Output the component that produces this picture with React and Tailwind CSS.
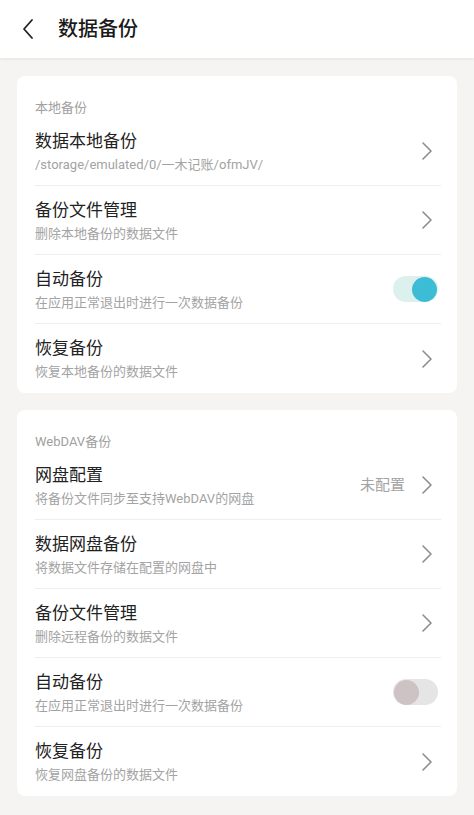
import React from 'react';

const font = { fontFamily: 'Roboto, "Noto Sans CJK SC", "Noto Sans", sans-serif' };

const Chevron = () => (
    <svg width="12" height="20" viewBox="0 0 12 20" fill="none" className="flex-shrink-0">
        <path d="M2 2l8 8-8 8" stroke="#8c8c8c" strokeWidth="1.6" strokeLinecap="round" strokeLinejoin="round" />
    </svg>
);

const Toggle = ({ on }) => (
    <div className="pr-[3px]">
        <div className={`w-[45px] h-[26px] rounded-full flex items-center px-[1px] ${on ? 'bg-[#dcf0ee] justify-end' : 'bg-[#e6e5e5] justify-start'}`}>
            <div className={`w-[25px] h-[25px] rounded-full ${on ? 'bg-[#3dbdd5]' : 'bg-[#cdc2c4]'}`} />
        </div>
    </div>
);

const Row = ({ title, sub, right, last }) => (
    <div className={`h-[69px] flex items-center ${last ? '' : 'border-b border-[#efeeee]'}`}>
        <div className="flex-1 min-w-0 pt-[1px]">
            <div className="text-[17px] leading-[24px] text-[#222]">{title}</div>
            <div className="text-[13px] leading-[20px] text-[#a3a3a3] mt-[2px]">{sub}</div>
        </div>
        {right}
    </div>
);

const Card = ({ label, rows }) => (
    <div className="bg-white rounded-[8px] pl-[18px] pr-[16px] pt-[22px]">
        <div className="text-[13px] leading-[19px] text-[#a0a0a0]">{label}</div>
        {rows.map((r, i) => (
            <Row key={i} {...r} last={i === rows.length - 1} />
        ))}
    </div>
);

const arrow = (
    <div className="pr-[8px]">
        <Chevron />
    </div>
);

export default function App() {
    const local = [
        { title: '数据本地备份', sub: '/storage/emulated/0/一木记账/ofmJV/', right: arrow },
        { title: '备份文件管理', sub: '删除本地备份的数据文件', right: arrow },
        { title: '自动备份', sub: '在应用正常退出时进行一次数据备份', right: <Toggle on /> },
        { title: '恢复备份', sub: '恢复本地备份的数据文件', right: arrow },
    ];
    const webdav = [
        {
            title: '网盘配置',
            sub: '将备份文件同步至支持WebDAV的网盘',
            right: (
                <div className="flex items-center gap-[16px] pr-[8px]">
                    <span className="text-[15px] text-[#a3a3a3]">未配置</span>
                    <Chevron />
                </div>
            ),
        },
        { title: '数据网盘备份', sub: '将数据文件存储在配置的网盘中', right: arrow },
        { title: '备份文件管理', sub: '删除远程备份的数据文件', right: arrow },
        { title: '自动备份', sub: '在应用正常退出时进行一次数据备份', right: <Toggle /> },
        { title: '恢复备份', sub: '恢复网盘备份的数据文件', right: arrow },
    ];

    return (
        <div className="w-[474px] min-h-[815px] bg-[#f5f4f3]" style={font}>
            <div className="h-[58px] bg-white flex items-center shadow-[0_1px_3px_rgba(0,0,0,0.08)] relative">
                <div className="w-[58px] flex justify-start pl-[21px]">
                    <svg width="14" height="22" viewBox="0 0 14 22" fill="none">
                        <path d="M11 2L3 11l8 9" stroke="#222" strokeWidth="1.8" strokeLinecap="round" strokeLinejoin="round" />
                    </svg>
                </div>
                <div className="text-[20px] font-medium text-[#1a1a1a]">数据备份</div>
            </div>
            <div className="px-[17px] pt-[18px] pb-[17px] flex flex-col gap-[17px]">
                <Card label="本地备份" rows={local} />
                <Card label="WebDAV备份" rows={webdav} />
            </div>
        </div>
    );
}
